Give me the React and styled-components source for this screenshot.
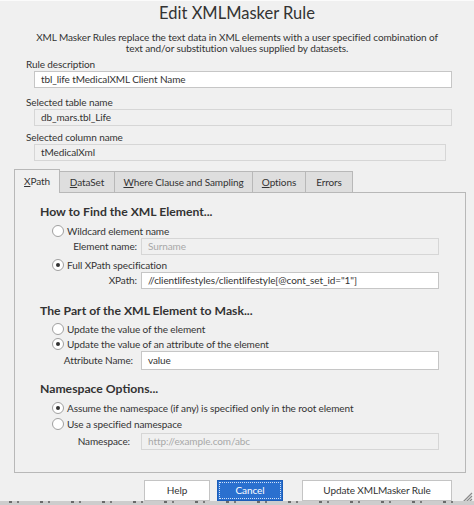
import React from 'react';
import styled, { createGlobalStyle } from 'styled-components';

const Global = createGlobalStyle`
  html, body {
    margin: 0;
    padding: 0;
    background: #f0f0f0;
  }
  body {
    width: 474px;
    height: 505px;
    overflow: hidden;
    font-family: Lato, Roboto, "Liberation Sans", sans-serif;
    font-size: 10px;
    letter-spacing: -0.1px;
    color: #333;
  }
`;

const Dialog = styled.div`
  width: 474px;
  height: 505px;
  box-sizing: border-box;
  display: flex;
  flex-direction: column;
  border-top: 1px solid #fbfbfb;
  background: #f0f0f0;
  position: relative;
  overflow: hidden;
`;

const Title = styled.h1`
  margin: 1px 0 0;
  font-size: 16.5px;
  font-weight: 400;
  letter-spacing: 0;
  text-align: center;
  color: #333;
  line-height: 22px;
`;

const Intro = styled.p`
  margin: 7.5px 0 0;
  font-size: 10px;
  line-height: 11px;
  text-align: center;
  color: #333;
`;

const Field = styled.div`
  display: flex;
  flex-direction: column;
  padding: 0 22px 0 26px;
  margin-top: ${p => p.$top || 0}px;
`;

const Label = styled.label`
  font-size: 10px;
  line-height: 12px;
  color: #333;
  margin-bottom: 1px;
`;

const Box = styled.div`
  box-sizing: border-box;
  height: 17px;
  margin-left: 8px;
  margin-right: ${p => p.$right || 0}px;
  padding: 0 6px;
  font-size: 10px;
  line-height: 15px;
  border: 1px solid ${p => (p.$readonly ? '#d6d6d6' : '#c6c6c6')};
  background: ${p => (p.$readonly ? '#f0f0f0' : '#fff')};
  color: ${p => (p.$muted ? '#a8a8a8' : '#333')};
  white-space: nowrap;
  overflow: hidden;
`;

const Tabs = styled.div`
  display: flex;
  margin: 8px 0 0 14px;
  height: 24px;
  align-items: flex-end;
`;

const Tab = styled.div`
  box-sizing: border-box;
  width: ${p => p.$w}px;
  height: ${p => (p.$active ? 24 : 22)}px;
  font-size: 10px;
  text-align: center;
  line-height: ${p => (p.$active ? 22 : 20)}px;
  color: #333;
  background: ${p => (p.$active ? '#f0f0f0' : '#dedede')};
  border: 1px solid #b8b8b8;
  border-bottom: ${p => (p.$active ? 'none' : '1px solid #b8b8b8')};
  border-left: ${p => (p.$first ? '1px solid #b8b8b8' : 'none')};
  position: relative;
  z-index: ${p => (p.$active ? 2 : 1)};
  u { text-decoration: underline; text-underline-offset: 1px; }
`;

const Panel = styled.div`
  box-sizing: border-box;
  margin: -1px 8px 0 14px;
  height: 281px;
  border: 1px solid #b8b8b8;
  padding: 11px 26px 0 25px;
  display: flex;
  flex-direction: column;
`;

const Heading = styled.h2`
  margin: ${p => p.$top || 0}px 0 0;
  font-size: 12.2px;
  font-weight: 700;
  letter-spacing: 0;
  color: #333;
  line-height: 16px;
`;

const RadioRow = styled.div`
  display: flex;
  align-items: center;
  gap: 3px;
  height: 14px;
  margin: ${p => p.$top || 0}px 0 0 12px;
  font-size: 10px;
  color: #333;
  white-space: nowrap;
`;

const Circle = styled.span`
  box-sizing: border-box;
  flex: none;
  width: 12px;
  height: 12px;
  border-radius: 50%;
  border: 1px solid #a0a0a0;
  background: #fff;
  display: flex;
  align-items: center;
  justify-content: center;
  &::after {
    content: '';
    display: ${p => (p.$checked ? 'block' : 'none')};
    width: 4px;
    height: 4px;
    border-radius: 50%;
    background: #333;
  }
`;

const FormRow = styled.div`
  display: grid;
  grid-template-columns: 97px 1fr;
  column-gap: 4px;
  align-items: center;
  margin-top: ${p => p.$top || 0}px;
`;

const RowLabel = styled.span`
  font-size: 10px;
  color: #333;
  text-align: right;
  white-space: nowrap;
  padding-right: ${p => p.$shift || 0}px;
`;

const RowBox = styled(Box)`
  margin-left: 0;
  height: ${p => p.$h || 17}px;
  line-height: ${p => (p.$h || 17) - 2}px;
`;

const Buttons = styled.div`
  display: flex;
  margin: 7px 0 0 144px;
  gap: 7px;
`;

const Button = styled.button`
  box-sizing: border-box;
  width: ${p => p.$w}px;
  height: 21px;
  margin-left: ${p => p.$ml || 0}px;
  font-family: inherit;
  font-size: 10px;
  letter-spacing: -0.1px;
  color: ${p => (p.$primary ? '#fff' : '#333')};
  background: ${p => (p.$primary ? '#2a70cf' : '#fff')};
  border: 1px solid ${p => (p.$primary ? '#1c5db8' : '#c4c4c4')};
  outline: ${p => (p.$primary ? '1px dotted #cfe0f7' : 'none')};
  outline-offset: -3px;
  padding: 0;
`;

const Grip = styled.svg`
  position: absolute;
  right: 1px;
  bottom: 2px;
`;

const Status = styled.div`
  position: absolute;
  left: 0;
  right: 0;
  bottom: 0;
  height: 4px;
  background:
    repeating-linear-gradient(90deg, transparent 0 9px, #6a6a6a 9px 12px, transparent 12px 17px, #7a7a7a 17px 19px, transparent 19px 31px) top / 100% 2px no-repeat,
    #cdcdcd;
`;

export default function App() {
  return (
    <>
      <Global />
      <Dialog>
        <Title>Edit XMLMasker Rule</Title>
        <Intro>
          XML Masker Rules replace the text data in XML elements with a user specified combination of
          <br />
          text and/or substitution values supplied by datasets.
        </Intro>

        <Field $top={4}>
          <Label>Rule description</Label>
          <Box>tbl_life tMedicalXML Client Name</Box>
        </Field>
        <Field $top={8}>
          <Label>Selected table name</Label>
          <Box $readonly>db_mars.tbl_Life</Box>
        </Field>
        <Field $top={5}>
          <Label>Selected column name</Label>
          <Box $readonly $right={6}>tMedicalXml</Box>
        </Field>

        <Tabs>
          <Tab $active $first $w={46}><u>X</u>Path</Tab>
          <Tab $w={55}><u>D</u>ataSet</Tab>
          <Tab $w={138}><u>W</u>here Clause and Sampling</Tab>
          <Tab $w={53}><u>O</u>ptions</Tab>
          <Tab $w={47}>Errors</Tab>
        </Tabs>
        <Panel>
          <Heading>How to Find the XML Element...</Heading>
          <RadioRow $top={4}><Circle />Wildcard element name</RadioRow>
          <FormRow>
            <RowLabel>Element name:</RowLabel>
            <RowBox $readonly $muted>Surname</RowBox>
          </FormRow>
          <RadioRow $top={3}><Circle $checked />Full XPath specification</RadioRow>
          <FormRow>
            <RowLabel>XPath:</RowLabel>
            <RowBox>//clientlifestyles/clientlifestyle[@cont_set_id="1"]</RowBox>
          </FormRow>

          <Heading $top={14}>The Part of the XML Element to Mask...</Heading>
          <RadioRow $top={3}><Circle />Update the value of the element</RadioRow>
          <RadioRow $top={1}><Circle $checked />Update the value of an attribute of the element</RadioRow>
          <FormRow>
            <RowLabel $shift={4}>Attribute Name:</RowLabel>
            <RowBox $h={19}>value</RowBox>
          </FormRow>

          <Heading $top={11}>Namespace Options...</Heading>
          <RadioRow $top={4}><Circle $checked />Assume the namespace (if any) is specified only in the root element</RadioRow>
          <RadioRow $top={2}><Circle />Use a specified namespace</RadioRow>
          <FormRow $top={2}>
            <RowLabel $shift={7}>Namespace:</RowLabel>
            <RowBox $readonly $muted>http://example.com/abc</RowBox>
          </FormRow>
        </Panel>

        <Buttons>
          <Button $w={66}>Help</Button>
          <Button $w={66} $primary>Cancel</Button>
          <Button $w={150} $ml={12}>Update XMLMasker Rule</Button>
        </Buttons>
        <Grip width="12" height="12" viewBox="0 0 12 12">
          <path d="M11 2 L2 11 M11 5 L5 11 M11 8 L8 11" stroke="#8a8a8a" strokeWidth="1.2" />
        </Grip>
        <Status />
      </Dialog>
    </>
  );
}
